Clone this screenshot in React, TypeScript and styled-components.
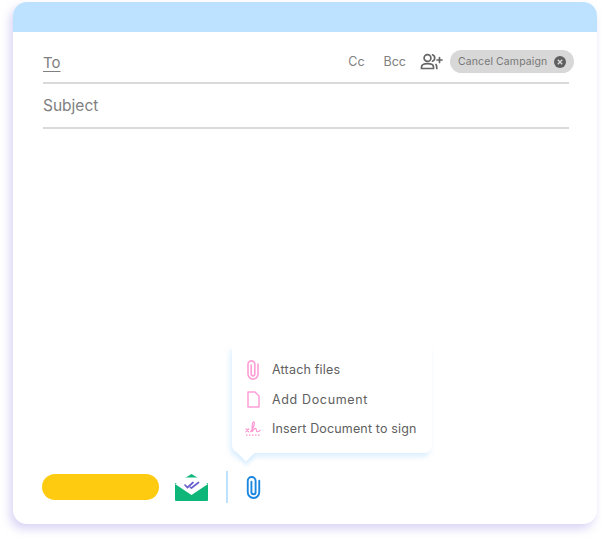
import React from "react";
import styled, { createGlobalStyle } from "styled-components";

const Global = createGlobalStyle`
  html, body { margin: 0; padding: 0; background: #fff; }
  body { font-family: Inter, "Liberation Sans", sans-serif; overflow: hidden; }
`;
const Page = styled.div`
  width: 601px;
  height: 540px;
  box-sizing: border-box;
  padding: 2px 4px 16px 13px;
`;
const Card = styled.div`
  position: relative;
  height: 522px;
  display: flex;
  flex-direction: column;
  background: #fff;
  border-radius: 14px;
  box-shadow: -3px 5px 10px rgba(170, 160, 232, 0.45);
`;
const Header = styled.div`
  height: 30px;
  flex: none;
  background: #bde2ff;
  border-radius: 14px 14px 0 0;
`;
const Fields = styled.div`
  flex: 1;
  display: flex;
  flex-direction: column;
  padding: 0 28px 0 30px;
`;
const Row = styled.div<{ $h: number; $pt: number }>`
  height: ${(p) => p.$h}px;
  padding-top: ${(p) => p.$pt}px;
  flex: none;
  box-sizing: border-box;
  display: flex;
  align-items: center;
  border-bottom: 2px solid #dadada;
`;
const ToLabel = styled.span`
  font-size: 15px;
  color: #808080;
  text-decoration: underline;
  text-underline-offset: 3px;
  text-decoration-thickness: 1px;
  margin-top: -1px;
`;
const SubjectLabel = styled.span`
  font-size: 15.5px;
  color: #808080;
`;
const Actions = styled.div`
  margin-left: auto;
  display: flex;
  align-items: center;
  margin-right: -5px;
  margin-top: -2px;
`;
const CopyLabel = styled.span<{ $mr: number }>`
  font-size: 12.5px;
  color: #808080;
  margin-right: ${(p) => p.$mr}px;
`;
const Pill = styled.div`
  margin-left: 7px;
  width: 124px;
  height: 23px;
  box-sizing: border-box;
  padding: 0 8px;
  background: #d8d8d8;
  border-radius: 12px;
  display: flex;
  align-items: center;
  justify-content: space-between;
`;
const PillText = styled.span`
  font-size: 10.5px;
  color: #777;
  letter-spacing: 0.1px;
  margin-top: -1px;
`;
const Footer = styled.div`
  margin: auto 0 20px -1px;
  display: flex;
  align-items: center;
  height: 34px;
`;
const SendBar = styled.div`
  width: 117px;
  height: 26px;
  border-radius: 13px;
  background: #ffcb10;
  margin-right: 16px;
`;
const Divider = styled.div`
  width: 2px;
  height: 32px;
  background: #bde2ff;
  margin: 0 18px 0 18px;
`;
const Popover = styled.div`
  position: absolute;
  left: 219px;
  top: 344px;
  width: 200px;
  height: 107px;
  box-sizing: border-box;
  padding: 9px 0 0 13px;
  background: #fff;
  border-radius: 0 0 8px 8px;
  box-shadow: -2px 4px 5px rgba(189, 226, 255, 0.5);
  display: flex;
  flex-direction: column;
  &::after {
    content: "";
    position: absolute;
    left: 8px;
    bottom: -6px;
    width: 12px;
    height: 12px;
    background: #fff;
    transform: rotate(45deg);
    box-shadow: 3px 3px 4px rgba(189, 226, 255, 0.5);
  }
`;
const MenuItem = styled.div`
  height: 29.5px;
  display: flex;
  align-items: center;
  gap: 11px;
`;
const IconSlot = styled.div`
  width: 16px;
  height: 24px;
  display: flex;
  align-items: center;
  justify-content: center;
  flex: none;
`;
const MenuText = styled.span<{ $ls: number }>`
  font-size: 12.5px;
  color: #606060;
  letter-spacing: ${(p) => p.$ls}px;
`;

const Clip = ({ color, w, h, sw }: { color: string; w: number; h: number; sw: number }) => (
  <svg width={w} height={h} viewBox="0 0 14 22" fill="none" stroke={color} strokeWidth={sw} strokeLinecap="round">
    <path d="M5 5.5V15.5A2 2 0 0 0 9 15.5V4.75A3.75 3.75 0 0 0 1.5 4.75V15.5A5.5 5.5 0 0 0 12.5 15.5V4.5" />
  </svg>
);

const App = () => (
  <>
    <Global />
    <Page>
      <Card>
        <Header />
        <Fields>
          <Row $h={52} $pt={11}>
            <ToLabel>To</ToLabel>
            <Actions>
              <CopyLabel $mr={19}>Cc</CopyLabel>
              <CopyLabel $mr={14}>Bcc</CopyLabel>
              <svg width="23" height="18" viewBox="0 0 23 18" fill="none" stroke="#666" strokeWidth="1.7" strokeLinecap="round">
                <circle cx="7.5" cy="5" r="3.4" />
                <path d="M1.5 15.5V14C1.5 11.8 4 10.7 7.5 10.7S13.5 11.8 13.5 14V15.5Z" />
                <path d="M12.5 1.8A3.4 3.4 0 0 1 12.5 8.2M16 11.5C16.6 12.4 16.8 13.5 16.8 15.5" />
                <path d="M19.5 4.5V9.5M17 7H22" />
              </svg>
              <Pill>
                <PillText>Cancel Campaign</PillText>
                <svg width="12" height="12" viewBox="0 0 12 12">
                  <circle cx="6" cy="6" r="6" fill="#5f5f5f" />
                  <path d="M3.8 3.8L8.2 8.2M8.2 3.8L3.8 8.2" stroke="#d8d8d8" strokeWidth="1.4" />
                </svg>
              </Pill>
            </Actions>
          </Row>
          <Row $h={45} $pt={0}>
            <SubjectLabel>Subject</SubjectLabel>
          </Row>
          <Footer>
            <SendBar />
            <svg width="33" height="27" viewBox="0 0 33 27">
              <path d="M16.5 0L23 4H10Z" fill="#0fb67a" />
              <path d="M0 9H33V26A1 1 0 0 1 32 27H1A1 1 0 0 1 0 26Z" fill="#0fb67a" />
              <path d="M4 3.5H29V8L33 10L16.5 21L0 10L4 8Z" fill="#fff" />
              <path d="M10 11L12.5 13.5L18 8.5M15.5 13.5L16.5 14L23.5 8.5" fill="none" stroke="#6a5fd0" strokeWidth="1.7" strokeLinecap="round" />
            </svg>
            <Divider />
            <Clip color="#1a86e0" w={15} h={23} sw={1.8} />
          </Footer>
        </Fields>
        <Popover>
          <MenuItem>
            <IconSlot><Clip color="#ff9fd6" w={14} h={20} sw={1.8} /></IconSlot>
            <MenuText $ls={0.2}>Attach files</MenuText>
          </MenuItem>
          <MenuItem>
            <IconSlot>
              <svg width="13" height="17" viewBox="0 0 13 17" fill="none" stroke="#ff9fd6" strokeWidth="1.5" strokeLinejoin="round">
                <path d="M1 1H8L12 5V16H1Z" />
              </svg>
            </IconSlot>
            <MenuText $ls={0.65}>Add Document</MenuText>
          </MenuItem>
          <MenuItem>
            <IconSlot>
              <svg width="17" height="17" viewBox="0 0 17 17" fill="none" stroke="#ff8fd0" strokeWidth="1.2" strokeLinecap="round">
                <path d="M1 9L4 12M4 9L1 12" />
                <path d="M6 12C8 9 10 5 10 3C10 1 8.5 1 8 3C7.6 5 7.5 9 7.5 12C8.5 10 10 8 11.5 8.5C12.5 9 11.5 12 13 12C14 12 15.5 11 16 10.5" />
                <path d="M1 15.5H16" strokeWidth="1.5" strokeLinecap="butt" strokeDasharray="1.6 1.6" />
              </svg>
            </IconSlot>
            <MenuText $ls={0.15}>Insert Document to sign</MenuText>
          </MenuItem>
        </Popover>
      </Card>
    </Page>
  </>
);

export default App;
